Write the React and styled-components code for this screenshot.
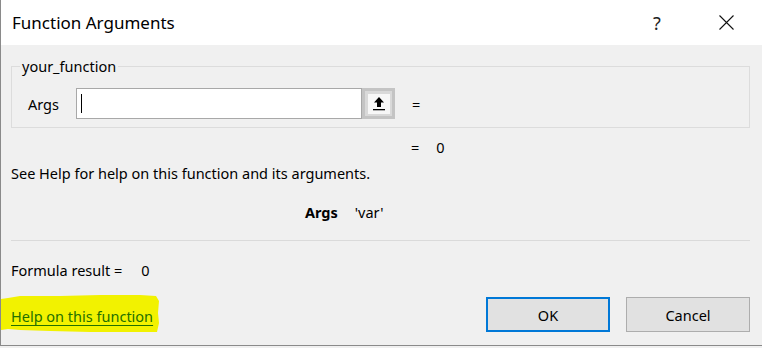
import React from "react";
import styled, { createGlobalStyle } from "styled-components";

const Global = createGlobalStyle`
  html, body { margin: 0; padding: 0; background: #f0f0f0; }
  body { font-family: "Noto Sans", "Open Sans", sans-serif; color: #000; }
`;

const Window = styled.div`
  width: 762px;
  height: 346px;
  box-sizing: border-box;
  border-left: 1px solid #8a8a8a;
  border-bottom: 1px solid #8a8a8a;
  background: #f0f0f0;
  display: flex;
  flex-direction: column;
  position: relative;
  overflow: hidden;
`;

const TitleBar = styled.div`
  height: 45px;
  background: #fff;
  display: flex;
  align-items: center;
  padding-left: 11px;
  flex-shrink: 0;
`;

const Title = styled.div`
  font-size: 17px;
  flex: 1;
`;

const TitleButton = styled.div`
  width: ${(p) => p.$w}px;
  display: flex;
  justify-content: center;
  align-items: center;
  font-size: 18px;
  color: #222;
`;

const Body = styled.div`
  flex: 1;
  display: flex;
  flex-direction: column;
  padding: 0 12px 0 10px;
  font-size: 14.5px;
  line-height: 20px;
`;

const Group = styled.fieldset`
  margin: 11px 0 0 0;
  padding: 12px 0 8px 0;
  border: 1px solid #dcdcdc;
  display: flex;
  align-items: center;
`;

const Legend = styled.legend`
  padding: 0 2px;
  margin-left: 8px;
  font-size: 14.5px;
  line-height: 20px;
`;

const Label = styled.div`
  width: 48px;
  margin-left: 16px;
`;

const InputBox = styled.div`
  width: 286px;
  height: 31px;
  box-sizing: border-box;
  border: 1px solid #a8a8a8;
  background: #fff;
  display: flex;
  align-items: center;
  padding-left: 4px;
`;

const Caret = styled.div`
  width: 1px;
  height: 19px;
  background: #000;
`;

const RefButton = styled.div`
  width: 33px;
  height: 31px;
  box-sizing: border-box;
  border: 3px solid #c4c4c4;
  background: #d9d9d9;
  display: flex;
  align-items: center;
  justify-content: center;
`;

const RefInner = styled.div`
  width: 22px;
  height: 20px;
  background: #f7f7f7;
  display: flex;
  align-items: center;
  justify-content: center;
`;

const Equals = styled.div`
  margin-left: 17px;
`;

const ResultRow = styled.div`
  display: flex;
  padding-left: 400px;
  margin-top: 9px;
  gap: 17px;
`;

const HelpText = styled.div`
  margin-top: 6px;
`;

const ArgRow = styled.div`
  display: flex;
  padding-left: 294px;
  margin-top: 19px;
  gap: 17px;
`;

const Bold = styled.span`
  font-weight: 700;
`;

const Separator = styled.div`
  height: 1px;
  background: #dadada;
  margin-top: 18px;
`;

const FormulaRow = styled.div`
  margin-top: 19px;
  display: flex;
  gap: 19px;
`;

const Footer = styled.div`
  margin-top: 17px;
  display: flex;
  align-items: center;
`;

const LinkWrap = styled.div`
  flex: 1;
  position: relative;
  padding-top: 3px;
`;

const Highlight = styled.svg`
  position: absolute;
  left: -11px;
  top: -10px;
`;

const Link = styled.a`
  position: relative;
  color: #237000;
  text-decoration: underline;
  text-underline-offset: 3px;
  cursor: pointer;
`;

const Button = styled.button`
  width: 124px;
  height: 35px;
  box-sizing: border-box;
  background: #e1e1e1;
  border: ${(p) => (p.$default ? "2px solid #0078d7" : "1px solid #adadad")};
  font-family: inherit;
  font-size: 14.5px;
  color: #000;
  margin-left: ${(p) => p.$ml || 0}px;
  padding: 0;
`;

export default function App() {
  return (
    <>
      <Global />
      <Window>
        <TitleBar>
          <Title>Function Arguments</Title>
          <TitleButton $w={68}>?</TitleButton>
          <TitleButton $w={71}>
            <svg width="15" height="15" viewBox="0 0 15 15">
              <path d="M0.5 0.5 L14.5 14.5 M14.5 0.5 L0.5 14.5" stroke="#111" strokeWidth="1.1" fill="none" />
            </svg>
          </TitleButton>
        </TitleBar>
        <Body>
          <Group>
            <Legend>your_function</Legend>
            <Label>Args</Label>
            <InputBox>
              <Caret />
            </InputBox>
            <RefButton>
              <RefInner>
                <svg width="14" height="15" viewBox="0 0 14 15">
                  <path d="M7 1 L12 6.5 L9 6.5 L9 11 L5 11 L5 6.5 L2 6.5 Z" fill="#000" />
                  <rect x="1" y="13" width="12" height="1.3" fill="#000" />
                </svg>
              </RefInner>
            </RefButton>
            <Equals>=</Equals>
          </Group>
          <ResultRow>
            <span>=</span>
            <span>0</span>
          </ResultRow>
          <HelpText>See Help for help on this function and its arguments.</HelpText>
          <ArgRow>
            <Bold>Args</Bold>
            <span>'var'</span>
          </ArgRow>
          <Separator />
          <FormulaRow>
            <span>Formula result =</span>
            <span>0</span>
          </FormulaRow>
          <Footer>
            <LinkWrap>
              <Highlight width="170" height="42" viewBox="0 0 170 42">
                <path
                  d="M0 6 L8 5 L20 3 L60 3 L100 2 L140 2 L156 3 L159 8 L158 20 L159 30 L157 39 L130 39 L90 39 L50 38 L20 37 L8 36 L0 37 Z"
                  fill="#f2f200"
                />
              </Highlight>
              <Link>Help on this function</Link>
            </LinkWrap>
            <Button $default>OK</Button>
            <Button $ml={16}>Cancel</Button>
          </Footer>
        </Body>
      </Window>
    </>
  );
}
